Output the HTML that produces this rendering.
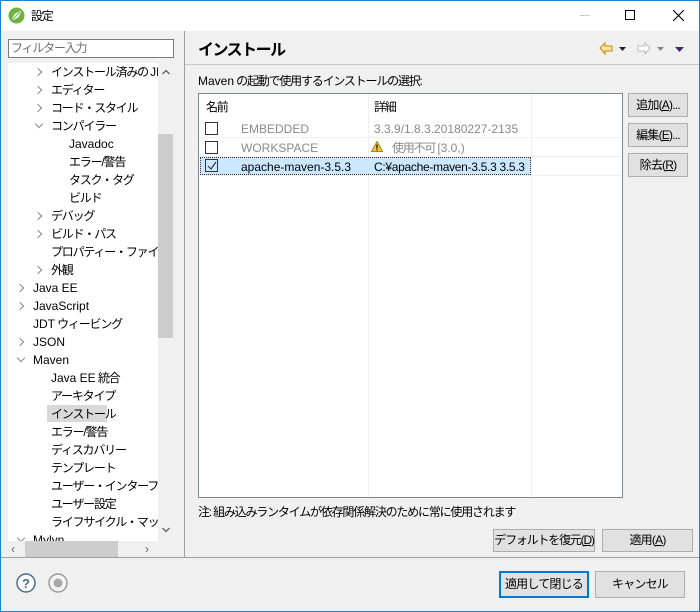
<!DOCTYPE html>
<html><head><meta charset="utf-8"><style>
*{margin:0;padding:0;box-sizing:border-box}
body{width:700px;height:612px;overflow:hidden;background:#f0f0f0;font-family:"Liberation Sans","Noto Sans CJK JP",sans-serif;font-size:12px;color:#000;position:relative}
.a{position:absolute;white-space:nowrap;line-height:16px}
.j{letter-spacing:-1.2px}
.l{letter-spacing:0}
.win{position:absolute;left:0;top:0;width:700px;height:612px;border:1px solid #1883d7;pointer-events:none}
.btn{position:absolute;background:#e1e1e1;border:1px solid #adadad;text-align:center;font-size:12px;white-space:nowrap;letter-spacing:-0.8px}
.chev{position:absolute;width:6px;height:6px;border-right:1.5px solid #8a8a8a;border-bottom:1.5px solid #8a8a8a}
.cb{position:absolute;width:13px;height:13px;border:1px solid #333;background:#fff}
</style></head><body>
<div class="a" style="left:0;top:0;width:700px;height:31px;background:#fff"></div>
<svg class="a" style="top:7px;left:8px" width="17" height="17" viewBox="0 0 17 17"><circle cx="8.5" cy="8.5" r="8" fill="#6db33f"/><path d="M4 13 C5 7 9 5 13 4 C12 9 10 12 4 13Z" fill="#fff"/><path d="M4.5 12.5 C7 10 9 8 12 5" stroke="#6db33f" stroke-width="1" fill="none"/></svg>
<div class="a j" style="left:31px;top:8px">設定</div>
<div class="a" style="left:580px;top:15px;width:10px;height:1px;background:#ccc"></div>
<div class="a" style="left:625px;top:10px;width:10px;height:10px;border:1px solid #000"></div>
<svg class="a" style="left:673px;top:10px" width="11" height="11"><path d="M0 0L11 11M11 0L0 11" stroke="#000" stroke-width="1.1"/></svg>

<div class="a" style="left:8px;top:39px;width:166px;height:19px;background:#fff;border:1px solid #7a7a7a"></div>
<div class="a j" style="left:11px;top:40px;color:#6d6d6d">フィルター入力</div>

<div class="a" style="left:8px;top:63px;width:166px;height:494px;background:#fff"></div>
<div class="a" style="left:158px;top:63px;width:16px;height:478px;background:#f0f0f0"></div>
<div class="a" style="left:158px;top:134px;width:15px;height:204px;background:#cdcdcd"></div>
<svg class="a" style="left:162px;top:69px" width="8" height="6"><path d="M0.5 5L4 1.5L7.5 5" stroke="#606060" stroke-width="1.3" fill="none"/></svg>
<svg class="a" style="left:162px;top:527px" width="8" height="6"><path d="M0.5 1L4 4.5L7.5 1" stroke="#606060" stroke-width="1.3" fill="none"/></svg>
<div class="a" style="left:8px;top:541px;width:150px;height:16px;background:#f0f0f0"></div>
<div class="a" style="left:25px;top:541px;width:93px;height:16px;background:#cdcdcd"></div>
<div class="a" style="left:11px;top:541px;color:#606060">‹</div>
<div class="a" style="left:145px;top:541px;color:#606060">›</div>
<div class="a" style="left:158px;top:541px;width:16px;height:16px;background:#f0f0f0"></div>
<div class="a j" style="left:8px;top:63px;width:150px;height:478px;overflow:hidden">
<div class="chev" style="left:27px;top:6px;transform:rotate(-45deg)"></div><div class="a" style="left:43px;top:1px">インストール済みの <span class="l">JRE</span></div>
<div class="chev" style="left:27px;top:24px;transform:rotate(-45deg)"></div><div class="a" style="left:43px;top:19px">エディター</div>
<div class="chev" style="left:27px;top:42px;transform:rotate(-45deg)"></div><div class="a" style="left:43px;top:37px">コード・スタイル</div>
<div class="chev" style="left:28px;top:58px;transform:rotate(45deg)"></div><div class="a" style="left:43px;top:55px">コンパイラー</div>
<div class="a l" style="left:61px;top:73px">Javadoc</div>
<div class="a" style="left:61px;top:91px">エラー/警告</div>
<div class="a" style="left:61px;top:109px">タスク・タグ</div>
<div class="a" style="left:61px;top:127px">ビルド</div>
<div class="chev" style="left:27px;top:150px;transform:rotate(-45deg)"></div><div class="a" style="left:43px;top:145px">デバッグ</div>
<div class="chev" style="left:27px;top:168px;transform:rotate(-45deg)"></div><div class="a" style="left:43px;top:163px">ビルド・パス</div>
<div class="a" style="left:43px;top:181px">プロパティー・ファイル・エディター</div>
<div class="chev" style="left:27px;top:204px;transform:rotate(-45deg)"></div><div class="a" style="left:43px;top:199px">外観</div>
<div class="chev" style="left:9px;top:222px;transform:rotate(-45deg)"></div><div class="a l" style="left:25px;top:217px">Java EE</div>
<div class="chev" style="left:9px;top:240px;transform:rotate(-45deg)"></div><div class="a l" style="left:25px;top:235px">JavaScript</div>
<div class="a" style="left:25px;top:253px"><span class="l">JDT</span> ウィービング</div>
<div class="chev" style="left:9px;top:276px;transform:rotate(-45deg)"></div><div class="a l" style="left:25px;top:271px">JSON</div>
<div class="chev" style="left:10px;top:292px;transform:rotate(45deg)"></div><div class="a l" style="left:25px;top:289px">Maven</div>
<div class="a" style="left:43px;top:307px"><span class="l">Java EE</span> 統合</div>
<div class="a" style="left:43px;top:325px">アーキタイプ</div>
<div class="a" style="left:39px;top:342px;width:60px;height:17px;background:#d9d9d9"></div>
<div class="a" style="left:43px;top:343px">インストール</div>
<div class="a" style="left:43px;top:361px">エラー/警告</div>
<div class="a" style="left:43px;top:379px">ディスカバリー</div>
<div class="a" style="left:43px;top:397px">テンプレート</div>
<div class="a" style="left:43px;top:415px">ユーザー・インターフェース</div>
<div class="a" style="left:43px;top:433px">ユーザー設定</div>
<div class="a" style="left:43px;top:451px">ライフサイクル・マッピング</div>
<div class="chev" style="left:10px;top:472px;transform:rotate(45deg)"></div><div class="a l" style="left:25px;top:469px">Mylyn</div>
</div>

<div class="a" style="left:184px;top:31px;width:1px;height:527px;background:#a0a0a0"></div>
<div class="a" style="left:185px;top:64px;width:515px;height:1px;background:#c8c8c8"></div>
<div class="a" style="left:198px;top:41px;font-size:16px;font-weight:bold;line-height:20px;letter-spacing:-1.5px">インストール</div>
<svg class="a" style="left:598px;top:41px" width="90" height="16"><path d="M2 7 L7 2 V5 H14 V10 H7 V13Z" fill="#fde4a0" stroke="#c88a00"/><path d="M21 6 h7 l-3.5 4z" fill="#222"/><path d="M52 7 L47 2 V5 H40 V10 H47 V13Z" fill="#fff" stroke="#bbb"/><path d="M59 6 h7 l-3.5 4z" fill="#888"/><path d="M77 6 h9 l-4.5 5z" fill="#3d2a6e"/></svg>
<div class="a j" style="left:198px;top:73px"><span class="l">Maven</span> の起動で使用するインストールの選択:</div>

<div class="a" style="left:198px;top:93px;width:425px;height:405px;background:#fff;border:1px solid #828790"></div>
<div class="a" style="left:368px;top:94px;width:1px;height:403px;background:#f0f0f0"></div>
<div class="a" style="left:531px;top:94px;width:1px;height:403px;background:#f0f0f0"></div>
<div class="a" style="left:199px;top:137px;width:423px;height:1px;background:#f0f0f0"></div>
<div class="a" style="left:199px;top:156px;width:423px;height:1px;background:#f0f0f0"></div>
<div class="a" style="left:199px;top:175px;width:423px;height:1px;background:#f0f0f0"></div>
<div class="a j" style="left:206px;top:99px">名前</div>
<div class="a j" style="left:374px;top:99px">詳細</div>
<div class="cb" style="left:205px;top:122px"></div>
<div class="a" style="left:241px;top:121px;color:#8a8a8a">EMBEDDED</div>
<div class="a" style="left:374px;top:121px;color:#8a8a8a">3.3.9/1.8.3.20180227-2135</div>
<div class="cb" style="left:205px;top:141px"></div>
<div class="a" style="left:241px;top:140px;color:#8a8a8a">WORKSPACE</div>
<svg class="a" style="left:371px;top:141px" width="12" height="11"><path d="M6 0.5L11.5 10.5H0.5Z" fill="#f5c842" stroke="#b08000"/><rect x="5.4" y="3.5" width="1.2" height="4" fill="#000"/><rect x="5.4" y="8.2" width="1.2" height="1.2" fill="#000"/></svg>
<div class="a j" style="left:392px;top:140px;color:#8a8a8a">使用不可 <span class="l">[3.0,)</span></div>
<div class="a" style="left:200px;top:157px;width:331px;height:18px;background:#cce8ff;border:1px dotted #333"></div>
<div class="cb" style="left:205px;top:159px;background:#cce8ff"></div>
<svg class="a" style="left:206px;top:160px" width="12" height="12"><path d="M2 6L5 9L10 2" stroke="#333" stroke-width="1.2" fill="none"/></svg>
<div class="a" style="left:241px;top:159px">apache-maven-3.5.3</div>
<div class="a" style="left:374px;top:159px;letter-spacing:-0.3px">C:¥apache-maven-3.5.3 3.5.3</div>

<div class="btn" style="left:628px;top:93px;width:60px;height:24px;line-height:22px">追加(<u>A</u>)...</div>
<div class="btn" style="left:628px;top:123px;width:60px;height:24px;line-height:22px">編集(<u>E</u>)...</div>
<div class="btn" style="left:628px;top:153px;width:60px;height:24px;line-height:22px">除去(<u>R</u>)</div>

<div class="a j" style="left:198px;top:504px">注: 組み込みランタイムが依存関係解決のために常に使用されます</div>
<div class="btn" style="left:493px;top:529px;width:102px;height:23px;line-height:21px;letter-spacing:-1.2px">デフォルトを復元(<u>D</u>)</div>
<div class="btn" style="left:602px;top:529px;width:91px;height:23px;line-height:21px">適用(<u>A</u>)</div>

<div class="a" style="left:1px;top:557px;width:698px;height:1px;background:#a0a0a0"></div>
<svg class="a" style="left:16px;top:573px" width="54" height="22"><circle cx="10" cy="10" r="9" fill="#fff" stroke="#4d6a8c" stroke-width="1.5"/><text x="10" y="15" font-size="13" font-family="Liberation Sans" text-anchor="middle" fill="#4d6a8c" font-weight="bold">?</text><circle cx="42" cy="10" r="9" fill="#f4f4f4" stroke="#9a9a9a" stroke-width="1.5"/><circle cx="42" cy="10" r="4.5" fill="#a8a8a8"/></svg>
<div class="btn" style="left:499px;top:571px;width:90px;height:27px;line-height:23px;border:2px solid #0078d7">適用して閉じる</div>
<div class="btn" style="left:595px;top:571px;width:90px;height:27px;line-height:25px">キャンセル</div>
<div class="win"></div>
</body></html>
